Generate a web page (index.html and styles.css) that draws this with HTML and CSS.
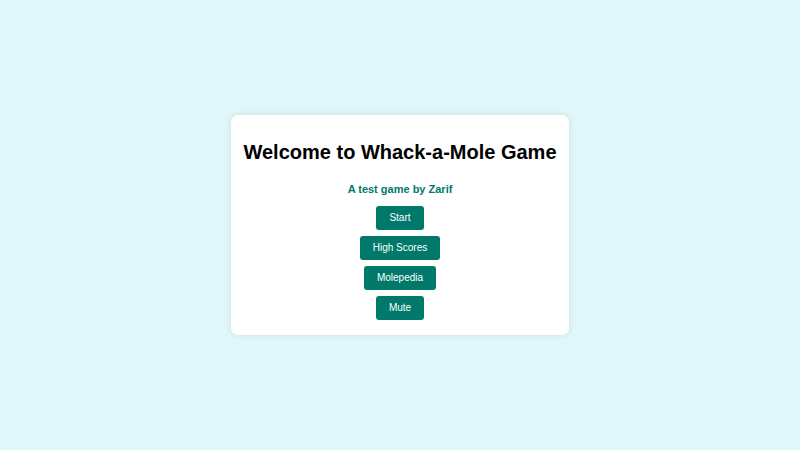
FILE: index.html
```html
<!DOCTYPE html>
<html lang="en">

<head>
    <meta charset="UTF-8">
    <meta name="viewport" content="width=device-width, initial-scale=1.0">
    <title>Whack-a-Mole Game</title>
    <link rel="stylesheet" href="styles.css">
</head>

<body>
    <div class="container">
        <h1>Welcome to Whack-a-Mole Game</h1>
        <p class="subtitle">A test game by Zarif</p>
        <div class="menu">
            <button type="button">Start</button>
            <button type="button">High Scores</button>
            <button type="button">Molepedia</button>
            <button type="button">Mute</button>
        </div>
    </div>
</body>

</html>
```

FILE: styles.css
```css
body {
    margin: 0;
    min-height: 100vh;
    display: flex;
    align-items: center;
    justify-content: center;
    background-color: #e0f7fa;
    font-family: Arial, "Liberation Sans", sans-serif;
}

.container {
    padding: 12px 12px 15px;
    background-color: white;
    border-radius: 7px;
    box-shadow: 0 0 6px rgba(0, 0, 0, 0.1);
    text-align: center;
}

h1 {
    margin: 13px 0 19px;
    font-size: 20px;
    line-height: 24px;
}

.subtitle {
    margin: 0 0 10px;
    color: #00796b;
    font-size: 11px;
    font-weight: bold;
    line-height: 13px;
}

.menu {
    display: flex;
    flex-direction: column;
    align-items: center;
    gap: 6px;
}

button {
    padding: 6px 13px;
    border: none;
    border-radius: 3px;
    background-color: #00796b;
    color: white;
    font-family: inherit;
    font-size: 10px;
    line-height: 12px;
    cursor: pointer;
}

button:hover {
    background-color: #004d40;
}
```
